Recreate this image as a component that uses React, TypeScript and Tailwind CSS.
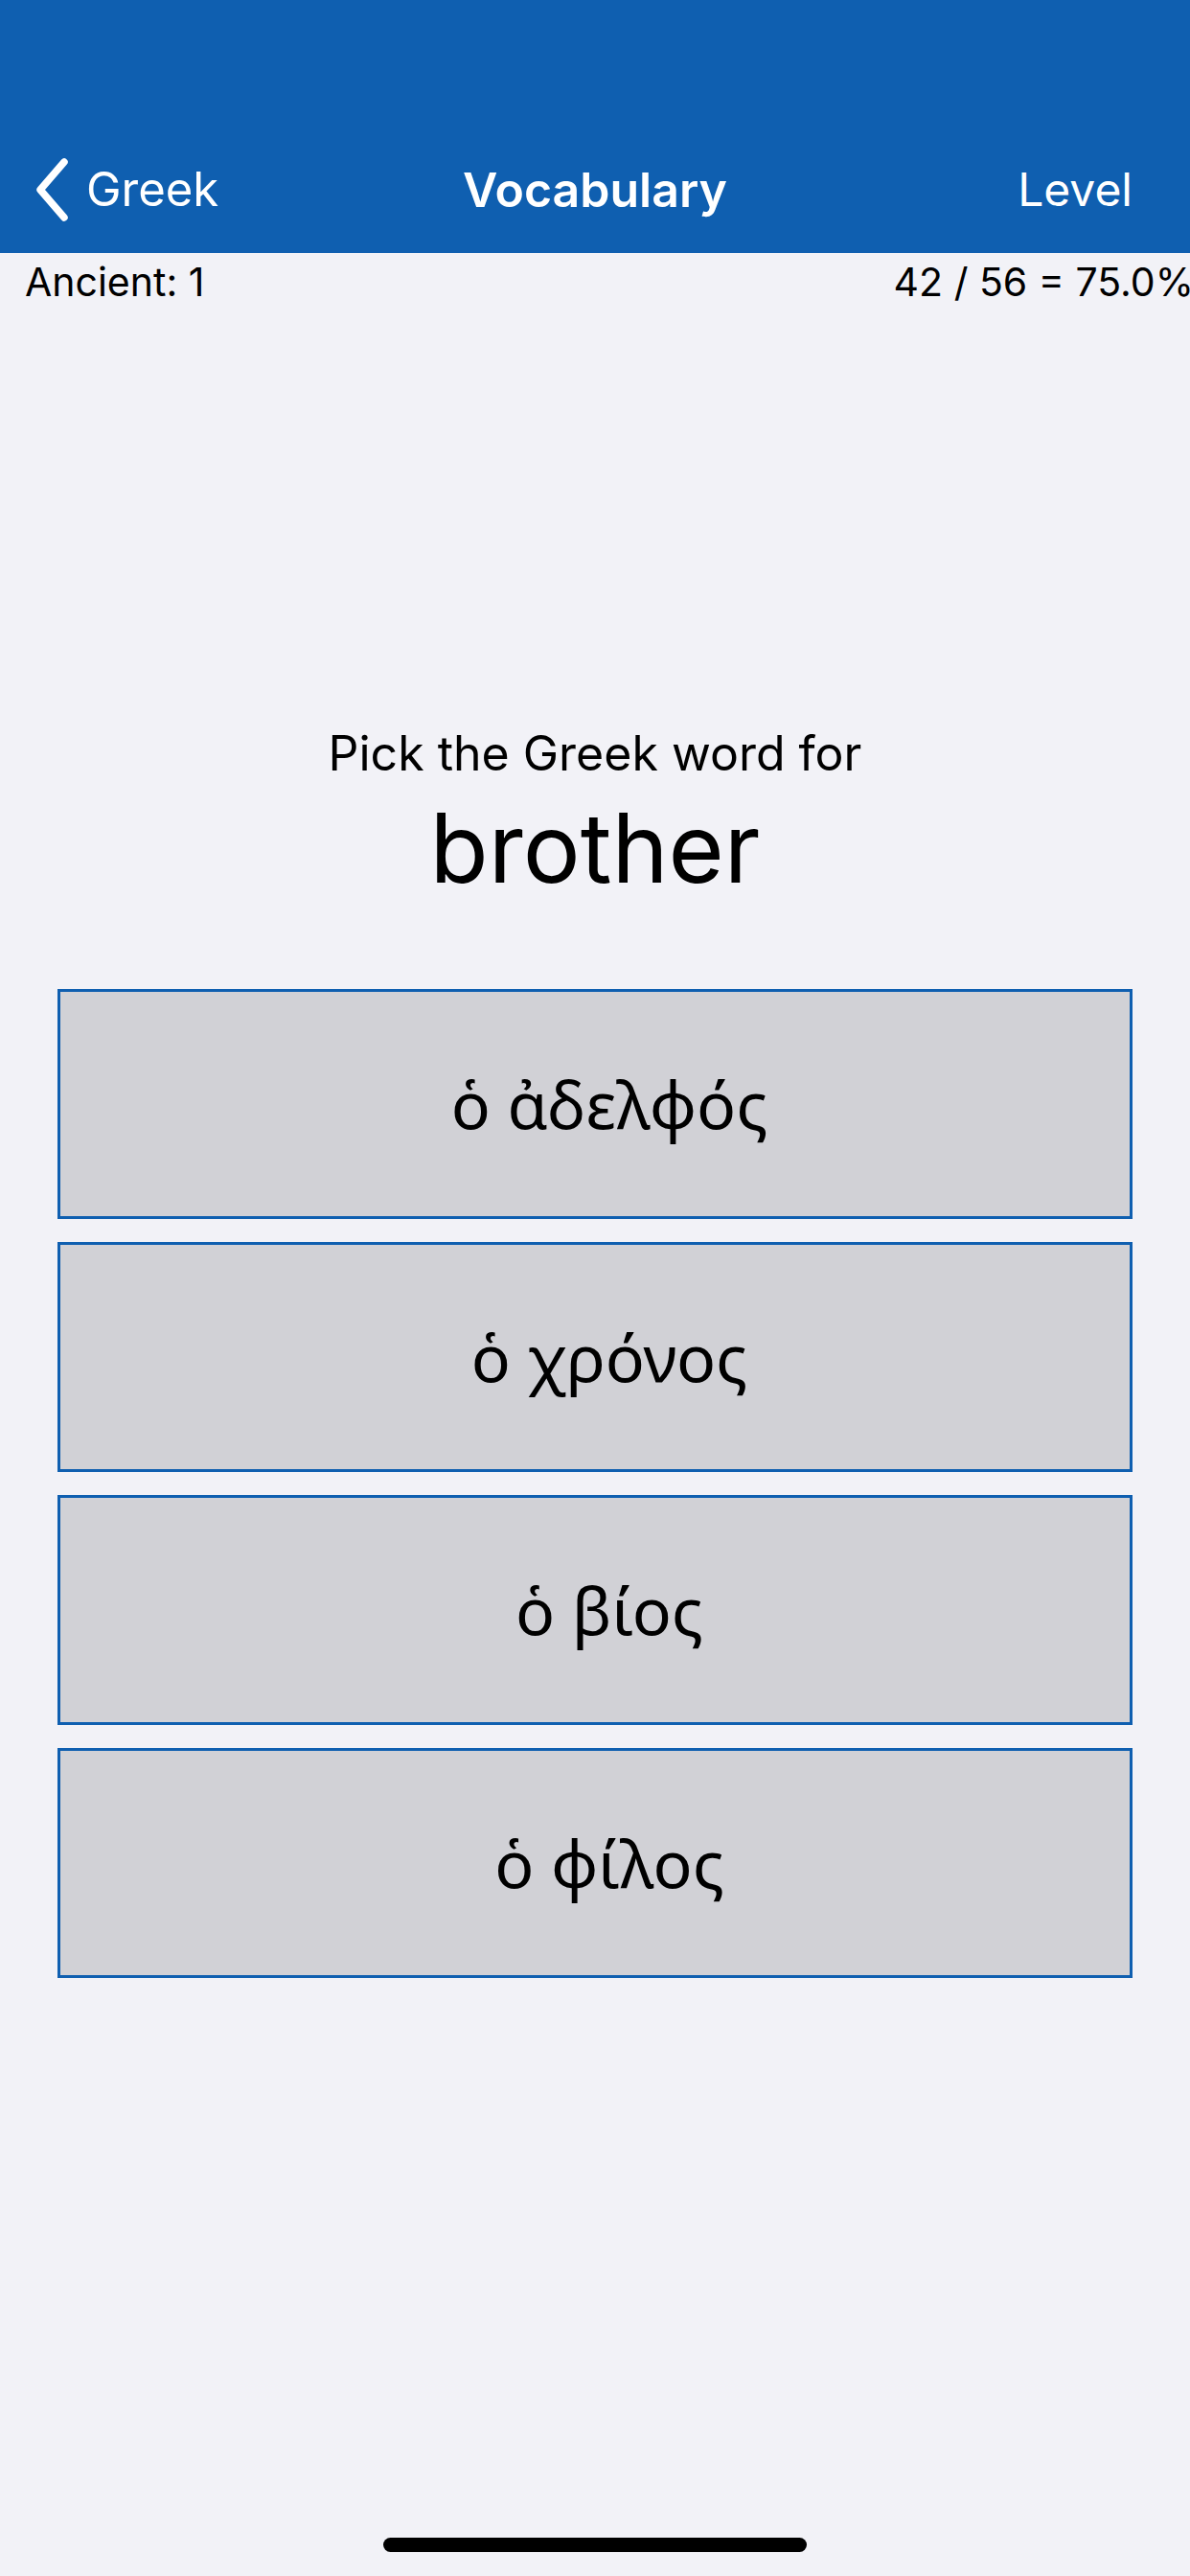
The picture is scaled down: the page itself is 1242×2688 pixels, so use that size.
import React from 'react';

const choices = ['ὁ ἀδελφός', 'ὁ χρόνος', 'ὁ βίος', 'ὁ φίλος'];

function BackChevron() {
  return (
    <svg width="44" height="70" viewBox="0 0 44 70" className="shrink-0">
      <path d="M37 6 L12 35 L37 64" fill="none" stroke="white" strokeWidth="7.5" strokeLinecap="round" strokeLinejoin="round" />
    </svg>
  );
}

export default function App() {
  return (
    <div className="min-h-[2688px] w-[1242px] bg-[#f2f2f7] flex flex-col font-[Inter,'Noto_Sans',sans-serif] text-black">
      <header className="bg-[#0f5fb0] h-[264px] flex flex-col justify-end">
        <div className="h-[132px] relative flex items-center">
          <div className="flex items-center pl-[30px] gap-[16px]">
            <BackChevron />
            <span className="text-[49px] text-white">Greek</span>
          </div>
          <span className="absolute left-0 right-0 text-center text-[50px] font-semibold text-white pointer-events-none">Vocabulary</span>
          <span className="ml-auto pr-[60px] text-[48px] text-white">Level</span>
        </div>
      </header>

      <div className="flex justify-between items-center h-[60px] pl-[26px] text-[41px] leading-none whitespace-nowrap">
        <span>Ancient: 1</span>
        <span className="-mr-[4px]">42 / 56 = 75.0%</span>
      </div>

      <main className="flex flex-col items-center pt-[432px]">
        <p className="text-[50px] leading-[60px]">Pick the Greek word for</p>
        <p className="text-[100px] leading-[110px] mt-[14px]">brother</p>

        <div className="flex flex-col gap-[24px] w-[1122px] mt-[92px]">
          {choices.map((c) => (
            <button
              key={c}
              className="h-[240px] bg-[#d1d1d6] border-[3px] border-[#0f5fb0] flex items-center justify-center pl-[30px] text-[68px] text-black"
              style={{ fontFamily: '"Noto Sans", "Open Sans", sans-serif' }}
            >
              {c}
            </button>
          ))}
        </div>
      </main>

      <div className="mt-auto flex justify-center pb-[25px]">
        <div className="w-[442px] h-[15px] rounded-full bg-black" />
      </div>
    </div>
  );
}
